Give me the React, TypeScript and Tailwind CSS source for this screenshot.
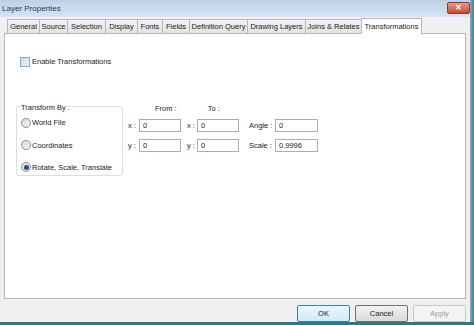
import React from "react";

const tabs = [
  { label: "General", w: 32 },
  { label: "Source", w: 28 },
  { label: "Selection", w: 38 },
  { label: "Display", w: 32 },
  { label: "Fonts", w: 25 },
  { label: "Fields", w: 27 },
  { label: "Definition Query", w: 58 },
  { label: "Drawing Layers", w: 58 },
  { label: "Joins & Relates", w: 56 },
];

function Radio({ checked }: { checked?: boolean }) {
  return (
    <span className="w-[10px] h-[10px] rounded-full border border-[#8e8f8f] bg-gradient-to-br from-[#d9d9d9] to-[#f4f4f4] flex items-center justify-center shrink-0">
      {checked && <span className="w-[5px] h-[5px] rounded-full bg-[#1d4f8a]" />}
    </span>
  );
}

function Field({ value, wide }: { value: string; wide?: boolean }) {
  return (
    <div
      className={
        (wide ? "w-[43px]" : "w-[42px]") +
        " h-[13px] border border-[#abadb3] bg-white pl-[3px] leading-[11px]"
      }
    >
      {value}
    </div>
  );
}

function Btn({ label, primary, disabled }: { label: string; primary?: boolean; disabled?: boolean }) {
  return (
    <div
      className={
        "w-[53px] h-[17px] rounded-[2px] flex items-center justify-center border " +
        (primary
          ? "border-[#3c7fb1] bg-gradient-to-b from-[#eaf6fd] to-[#d3e8f6]"
          : disabled
          ? "border-[#c6c6c6] bg-[#f4f4f4] text-[#9b9b9b]"
          : "border-[#707070] bg-gradient-to-b from-[#f2f2f2] to-[#dadada]")
      }
    >
      {label}
    </div>
  );
}

export default function App() {
  return (
    <div
      className="w-[474px] h-[325px] flex flex-col bg-[#f0f0f0] text-[7.5px] text-[#1b1b1b] overflow-hidden"
      style={{ fontFamily: '"Liberation Sans", Arial, sans-serif' }}
    >
      <div className="flex flex-1">
        <div className="w-[470px] flex flex-col">
          {/* title bar */}
          <div className="h-[17px] flex items-center justify-between bg-gradient-to-b from-[#bcd1e8] to-[#d7e4f2] pl-[2px]">
            <span className="text-[8px] text-[#1e3a5c]">Layer Properties</span>
            <div className="w-[23px] h-[12px] mt-[-2px] rounded-[2px] border border-[#8a3a2e] bg-gradient-to-b from-[#e4988a] to-[#c54a35] flex items-center justify-center text-white text-[8px] font-bold">
              ✕
            </div>
          </div>

          {/* tabs */}
          <div className="flex items-end pl-[7px] h-[16px]">
            {tabs.map((t) => (
              <div
                key={t.label}
                style={{ width: t.w }}
                className="h-[14px] border border-r-0 border-b-0 border-[#b7b7b7] bg-gradient-to-b from-[#f2f2f2] to-[#e3e3e3] flex items-center justify-center whitespace-nowrap"
              >
                {t.label}
              </div>
            ))}
            <div className="w-[61px] h-[16px] mb-[-1px] border border-b-0 border-[#b7b7b7] bg-white flex items-start pt-[2px] justify-center relative z-10">
              Transformations
            </div>
          </div>

          {/* panel */}
          <div className="ml-[4px] w-[462px] h-[266px] border border-[#b7b7b7] bg-white pl-[11px] pt-[22px] flex flex-col">
            <div className="flex items-center gap-[2px] ml-[4px]">
              <span className="w-[10px] h-[10px] border border-[#8aa6c4] bg-gradient-to-br from-[#c5dcef] to-[#e9f2fa]" />
              <span>Enable Transformations</span>
            </div>

            <div className="flex mt-[37px]">
              <div className="relative w-[107px] h-[70px] border border-[#d5dfe5] rounded-[3px] mt-[2px] flex flex-col pl-[4px] pt-[10px] gap-[11px]">
                <span className="absolute top-[-5px] left-[3px] bg-white px-[1px]">Transform By :</span>
                <div className="flex items-center gap-[1px]">
                  <Radio />
                  <span>World File</span>
                </div>
                <div className="flex items-center gap-[1px]">
                  <Radio />
                  <span>Coordinates</span>
                </div>
                <div className="flex items-center gap-[1px]">
                  <Radio checked />
                  <span>Rotate, Scale, Translate</span>
                </div>
              </div>

              <div className="ml-[5px] flex flex-col">
                <div className="flex h-[9px] items-center">
                  <span className="ml-[27px]">From :</span>
                  <span className="ml-[31px]">To :</span>
                </div>
                <div className="flex items-center mt-[6px]">
                  <span className="w-[11px]">x :</span>
                  <Field value="0" />
                  <span className="w-[10px] ml-[6px]">x :</span>
                  <Field value="0" />
                  <span className="w-[26px] ml-[10px]">Angle :</span>
                  <Field value="0" wide />
                </div>
                <div className="flex items-center mt-[7px]">
                  <span className="w-[11px]">y :</span>
                  <Field value="0" />
                  <span className="w-[10px] ml-[6px]">y :</span>
                  <Field value="0" />
                  <span className="w-[26px] ml-[10px]">Scale :</span>
                  <Field value="0.9996" wide />
                </div>
              </div>
            </div>
          </div>

          {/* buttons */}
          <div className="flex justify-end gap-[5px] mt-[6px] pr-[4px]">
            <Btn label="OK" primary />
            <Btn label="Cancel" />
            <Btn label="Apply" disabled />
          </div>
        </div>
        <div className="w-[4px] bg-gradient-to-r from-[#7fb3c0] to-[#3d7f88]" />
      </div>
      <div className="h-[4px] bg-[#2c7a7b]" />
    </div>
  );
}
